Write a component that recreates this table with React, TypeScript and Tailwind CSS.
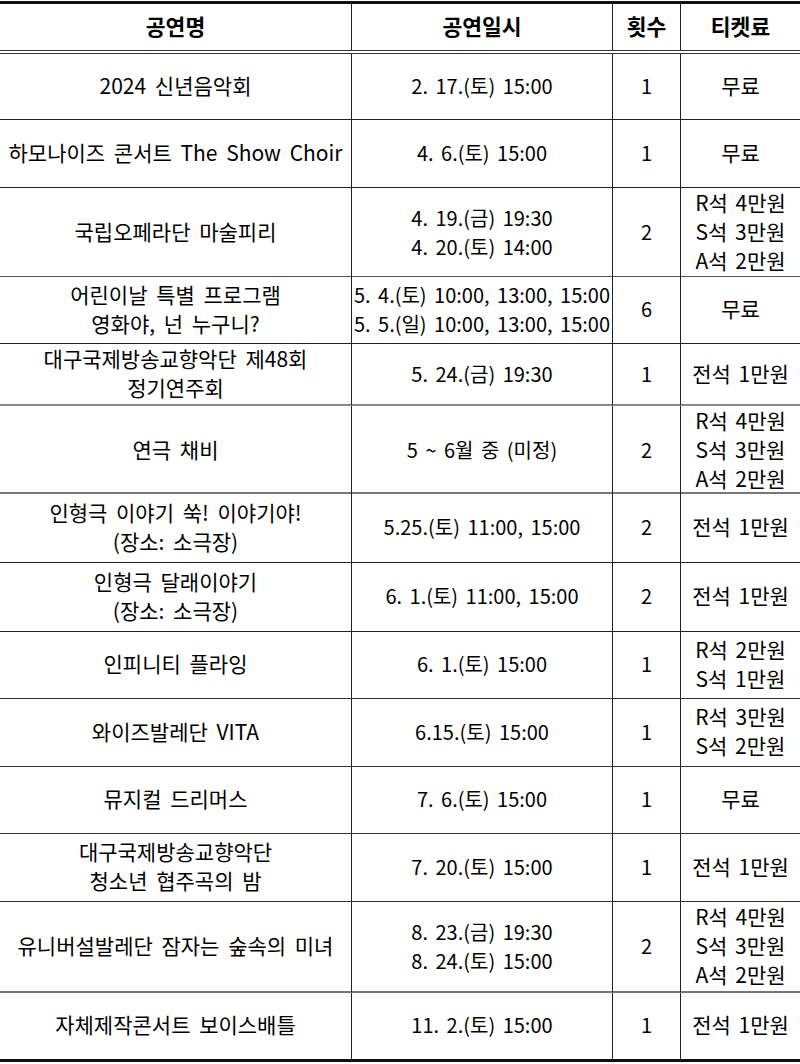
const rows: {
  name: string[];
  date: string[];
  count: string;
  ticket: string[];
  h: string;
  line: string;
}[] = [
  { name: ["2024 신년음악회"], date: ["2. 17.(토) 15:00"], count: "1", ticket: ["무료"], h: "h-[66px]", line: "border-b border-[#222]" },
  { name: ["하모나이즈 콘서트 The Show Choir"], date: ["4. 6.(토) 15:00"], count: "1", ticket: ["무료"], h: "h-[68px]", line: "border-b border-[#222]" },
  { name: ["국립오페라단 마술피리"], date: ["4. 19.(금) 19:30", "4. 20.(토) 14:00"], count: "2", ticket: ["R석 4만원", "S석 3만원", "A석 2만원"], h: "h-[89px]", line: "border-b border-[#555]" },
  { name: ["어린이날 특별 프로그램", "영화야, 넌 누구니?"], date: ["5. 4.(토) 10:00, 13:00, 15:00", "5. 5.(일) 10:00, 13:00, 15:00"], count: "6", ticket: ["무료"], h: "h-[67px]", line: "border-b border-[#222]" },
  { name: ["대구국제방송교향악단 제48회", "정기연주회"], date: ["5. 24.(금) 19:30"], count: "1", ticket: ["전석 1만원"], h: "h-[62px]", line: "border-b-2 border-[#888]" },
  { name: ["연극 채비"], date: ["5 ~ 6월 중 (미정)"], count: "2", ticket: ["R석 4만원", "S석 3만원", "A석 2만원"], h: "h-[88px]", line: "border-b-2 border-[#777]" },
  { name: ["인형극 이야기 쑥! 이야기야!", "(장소: 소극장)"], date: ["5.25.(토) 11:00, 15:00"], count: "2", ticket: ["전석 1만원"], h: "h-[69px]", line: "border-b border-[#222]" },
  { name: ["인형극 달래이야기", "(장소: 소극장)"], date: ["6. 1.(토) 11:00, 15:00"], count: "2", ticket: ["전석 1만원"], h: "h-[69px]", line: "border-b border-[#222]" },
  { name: ["인피니티 플라잉"], date: ["6. 1.(토) 15:00"], count: "1", ticket: ["R석 2만원", "S석 1만원"], h: "h-[67px]", line: "border-b border-[#333]" },
  { name: ["와이즈발레단 VITA"], date: ["6.15.(토) 15:00"], count: "1", ticket: ["R석 3만원", "S석 2만원"], h: "h-[68px]", line: "border-b border-[#333]" },
  { name: ["뮤지컬 드리머스"], date: ["7. 6.(토) 15:00"], count: "1", ticket: ["무료"], h: "h-[67px]", line: "border-b border-[#333]" },
  { name: ["대구국제방송교향악단", "청소년 협주곡의 밤"], date: ["7. 20.(토) 15:00"], count: "1", ticket: ["전석 1만원"], h: "h-[68px]", line: "border-b border-[#333]" },
  { name: ["유니버설발레단 잠자는 숲속의 미녀"], date: ["8. 23.(금) 19:30", "8. 24.(토) 15:00"], count: "2", ticket: ["R석 4만원", "S석 3만원", "A석 2만원"], h: "h-[91px]", line: "border-b-2 border-[#777]" },
  { name: ["자체제작콘서트 보이스배틀"], date: ["11. 2.(토) 15:00"], count: "1", ticket: ["전석 1만원"], h: "h-[69px]", line: "border-b-[3px] border-[#111]" },
];

const cols = "grid grid-cols-[352px_261px_68px_119px]";

function Cell({ lines, className = "", last }: { lines: string[]; className?: string; last?: boolean }) {
  return (
    <div
      className={`flex flex-col items-center justify-center whitespace-pre pb-[3px] ${className} ${
        last ? "" : "border-r border-[#222]"
      }`}
    >
      {lines.map((l, i) => (
        <span key={i}>{l}</span>
      ))}
    </div>
  );
}

export default function App() {
  return (
    <div
      className="w-[800px] h-[1064px] bg-white text-black leading-[29px] overflow-hidden"
      style={{ fontFamily: '"Noto Sans CJK KR", "Noto Sans", sans-serif' }}
    >
      <div className="mt-[1px] border-t-[3px] border-[#111]">
        {/* header */}
        <div className={`${cols} h-[50px] border-b-[4px] border-double border-[#333] font-bold text-[21.5px]`}>
          <Cell lines={["공연명"]} />
          <Cell lines={["공연일시"]} />
          <Cell lines={["횟수"]} />
          <Cell lines={["티켓료"]} last />
        </div>
        {rows.map((r, i) => (
          <div key={i} className={`${cols} ${r.h} ${r.line}`}>
            <Cell lines={r.name} className="text-[21px] [word-spacing:4px]" />
            <Cell lines={r.date} className="text-[20px] [word-spacing:3px]" />
            <Cell lines={[r.count]} className="text-[20px]" />
            <Cell lines={r.ticket} className="text-[21px] [word-spacing:3px]" last />
          </div>
        ))}
      </div>
    </div>
  );
}
